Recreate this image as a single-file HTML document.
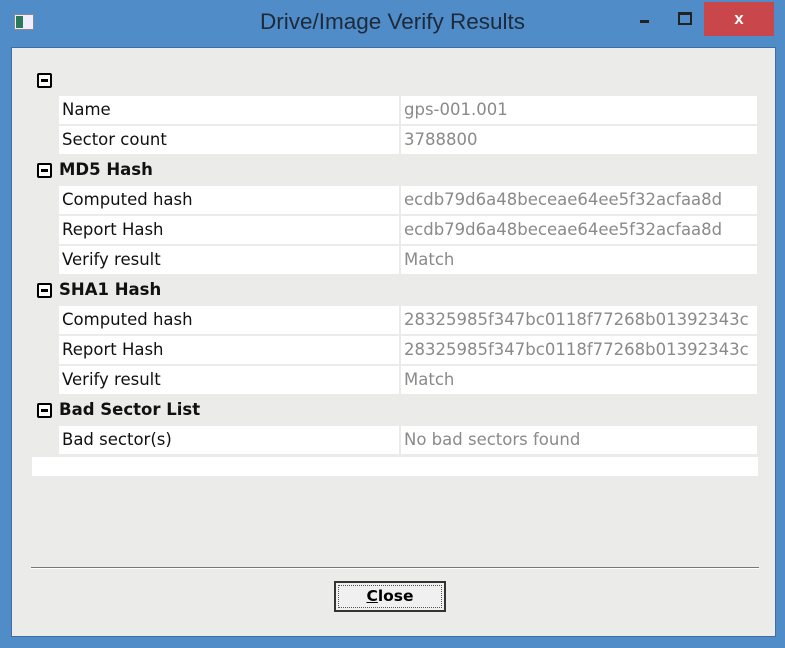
<!DOCTYPE html><html><head><style>
body{margin:0;width:785px;height:648px;background:#4f8cc8;position:relative;overflow:hidden;font-family:"DejaVu Sans","Liberation Sans",sans-serif}
.title{position:absolute;left:0;right:0;top:9px;text-align:center;font-family:"Liberation Sans",sans-serif;font-size:22.5px;color:#1e2a3a}
.client{position:absolute;left:11px;top:47px;width:763px;height:588px;background:#ebebea;border:1px solid #3c6fa5}
.tree{position:absolute;left:20px;top:18px;width:726px;height:411px}
.row{position:absolute;left:0;width:726px;height:28px;font-size:16.5px;line-height:28px}
.lab{position:absolute;left:27px;width:340px;height:28px;background:#fff;padding-left:3px;box-sizing:border-box;color:#111}
.val{position:absolute;left:369px;width:356px;height:28px;background:#fff;padding-left:3px;box-sizing:border-box;color:#8a8a8a;overflow:hidden;white-space:nowrap}
.grp{position:absolute;left:27px;font-weight:bold;color:#111}
.box{position:absolute;left:5px;top:7px;width:11px;height:11px;border:2px solid #000;border-radius:2px;background:#fff}
.box:after{content:"";position:absolute;left:2px;top:4px;width:7px;height:3px;background:#000}
</style></head><body>
<div style="position:absolute;left:14px;top:14px;width:18px;height:14px;background:#eef;border:1px solid #888"><div style="width:7px;height:12px;background:#2a7a5a;margin:1px"></div></div>
<div class="title">Drive/Image Verify Results</div>
<div style="position:absolute;left:640px;top:20px;width:9px;height:3px;background:#222"></div>
<div style="position:absolute;left:678px;top:12px;width:10px;height:8px;border:2px solid #222;border-top-width:3px"></div>
<div style="position:absolute;left:704px;top:2px;width:70px;height:34px;background:#c9474b;color:#fff;font:bold 17px 'Liberation Sans',sans-serif;text-align:center;line-height:34px">x</div>
<div class="client">
<div class="tree">
<div class="row" style="top:0"><div class="box"></div></div>
<div class="row" style="top:30px"><div class="lab">Name</div><div class="val">gps-001.001</div></div>
<div class="row" style="top:60px"><div class="lab">Sector count</div><div class="val">3788800</div></div>
<div class="row" style="top:90px"><div class="box"></div><div class="grp">MD5 Hash</div></div>
<div class="row" style="top:120px"><div class="lab">Computed hash</div><div class="val">ecdb79d6a48beceae64ee5f32acfaa8d</div></div>
<div class="row" style="top:150px"><div class="lab">Report Hash</div><div class="val">ecdb79d6a48beceae64ee5f32acfaa8d</div></div>
<div class="row" style="top:180px"><div class="lab">Verify result</div><div class="val">Match</div></div>
<div class="row" style="top:210px"><div class="box"></div><div class="grp">SHA1 Hash</div></div>
<div class="row" style="top:240px"><div class="lab">Computed hash</div><div class="val">28325985f347bc0118f77268b01392343c</div></div>
<div class="row" style="top:270px"><div class="lab">Report Hash</div><div class="val">28325985f347bc0118f77268b01392343c</div></div>
<div class="row" style="top:300px"><div class="lab">Verify result</div><div class="val">Match</div></div>
<div class="row" style="top:330px"><div class="box"></div><div class="grp">Bad Sector List</div></div>
<div class="row" style="top:360px"><div class="lab">Bad sector(s)</div><div class="val">No bad sectors found</div></div>
<div style="position:absolute;top:391px;left:0;width:726px;height:19px;background:#fff"></div>
</div>
<div style="position:absolute;left:19px;top:519px;width:728px;height:1px;background:#777;border-bottom:1px solid #fff"></div>
<div style="position:absolute;left:322px;top:533px;width:112px;height:31px;border:2px solid #333;box-sizing:border-box;background:#f0f0f0;font-size:15.5px;font-weight:bold;text-align:center;line-height:26px;outline:1px dotted #555;outline-offset:-5px"><u>C</u>lose</div>
</div>
</body></html>
